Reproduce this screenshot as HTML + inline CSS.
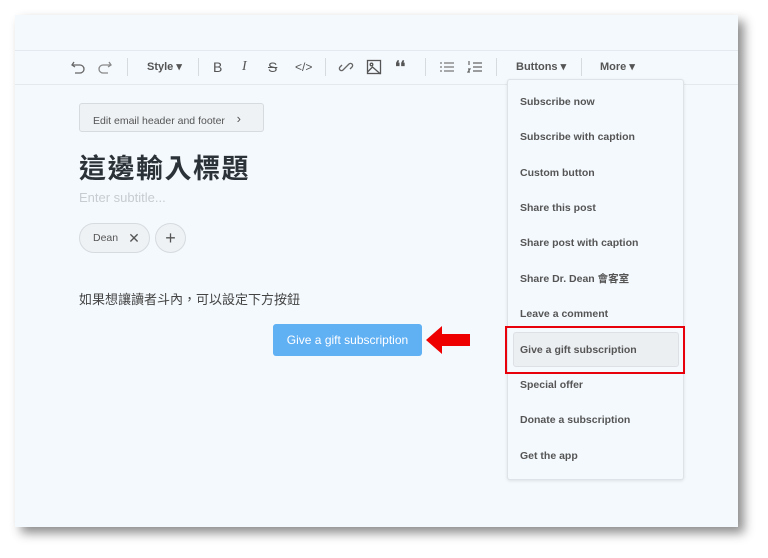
<!DOCTYPE html>
<html><head><meta charset="utf-8"><style>
*{margin:0;padding:0;box-sizing:border-box}
body{width:768px;height:558px;background:#fff;position:relative;overflow:hidden;font-family:"Liberation Sans","Noto Sans CJK TC",sans-serif}
.panel{position:absolute;left:15px;top:15px;width:723px;height:512px;background:#f4f9fd;box-shadow:6px 6px 10px rgba(0,0,0,.45)}
.abs{position:absolute}
.hl{position:absolute;left:15px;width:723px;height:1px;background:#e3e9ee}
.tb{position:absolute;top:60px;font-size:11px;font-weight:bold;color:#555}
.sep{position:absolute;top:58px;width:1px;height:18px;background:#d6dbe0}
.ic{position:absolute;top:59px}
.dd{position:absolute;left:507px;top:79px;width:177px;height:401px;background:#f4f9fd;border:1px solid #dde3e8;border-radius:3px;box-shadow:0 1px 3px rgba(0,0,0,.1)}
.it{position:absolute;left:520px;font-size:10.5px;font-weight:bold;color:#555;line-height:13px;height:13px}
</style></head><body>
<div class="panel"></div>
<div class="hl" style="top:50px"></div>
<div class="hl" style="top:84px"></div>
<svg class="ic" style="left:70px" width="16" height="16" viewBox="0 0 16 16" fill="none" stroke="#666" stroke-width="1.3"><path d="M4 3L2 6l3 2"/><path d="M2.5 6H10a4 4 0 010 8H5"/></svg>
<svg class="ic" style="left:97px" width="16" height="16" viewBox="0 0 16 16" fill="none" stroke="#888" stroke-width="1.3"><path d="M12 3l2 3-3 2"/><path d="M13.5 6H6a4 4 0 000 8h5"/></svg>
<div class="sep" style="left:127px"></div>
<div class="tb" style="left:147px">Style ▾</div>
<div class="sep" style="left:198px"></div>
<div class="tb" style="left:213px;font-size:14px;top:59px;font-weight:normal;color:#555">B</div>
<div class="tb" style="left:242px;font-size:14px;top:59px;font-weight:normal;font-style:italic;font-family:'Liberation Serif',serif;color:#555">I</div>
<div class="tb" style="left:268px;font-size:14px;top:59px;font-weight:normal;text-decoration:line-through;color:#555">S</div>
<div class="tb" style="left:295px;font-size:12px;top:60px;font-weight:normal;color:#555">&lt;/&gt;</div>
<div class="sep" style="left:325px"></div>
<svg class="ic" style="left:338px" width="16" height="16" viewBox="0 0 16 16" fill="none" stroke="#666" stroke-width="1.3"><path d="M7 9l-2 2a2 2 0 01-3-3l2-2M9 7l2-2a2 2 0 013 3l-2 2M6 10l4-4"/></svg>
<svg class="ic" style="left:366px" width="16" height="16" viewBox="0 0 16 16" fill="none" stroke="#555" stroke-width="1.3"><rect x="1.5" y="1.5" width="13" height="13"/><circle cx="5.5" cy="5.5" r="1.3"/><path d="M1.5 13l5-5 8 7"/></svg>
<div class="tb" style="left:395px;font-size:16px;top:57px;color:#555">❛❛</div>
<div class="sep" style="left:425px"></div>
<svg class="ic" style="left:439px" width="16" height="16" viewBox="0 0 16 16" fill="none" stroke="#777" stroke-width="1.2"><path d="M5 4h10M5 8h10M5 12h10M1 4h2M1 8h2M1 12h2"/></svg>
<svg class="ic" style="left:467px" width="16" height="16" viewBox="0 0 16 16" fill="none" stroke="#666" stroke-width="1.2"><path d="M6 4h9M6 8h9M6 12h9M2 2v4M1 10h2l-2 3h2"/></svg>
<div class="sep" style="left:496px"></div>
<div class="tb" style="left:516px">Buttons ▾</div>
<div class="sep" style="left:581px"></div>
<div class="tb" style="left:600px">More ▾</div>

<div class="abs" style="left:79px;top:103px;width:185px;height:29px;background:#eef2f5;border:1px solid #d6dbe0;border-radius:3px;font-size:10.5px;color:#555;padding:8px 0 0 13px">Edit email header and footer&nbsp;&nbsp;&nbsp;&nbsp;<span style="font-size:13px;position:relative;top:-1px">›</span></div>
<div class="abs" style="left:79px;top:147px;font-size:27px;font-weight:bold;color:#2b3238;letter-spacing:1.5px">這邊輸入標題</div>
<div class="abs" style="left:79px;top:190px;font-size:13px;color:#c6ccd1">Enter subtitle...</div>
<div class="abs" style="left:79px;top:223px;width:71px;height:30px;border:1px solid #d6dbe0;border-radius:15px;background:#eef2f5;font-size:10.5px;color:#555;display:flex;align-items:center;padding-left:13px">Dean<span style="font-size:14px;margin-left:10px">✕</span></div>
<div class="abs" style="left:155px;top:223px;width:31px;height:30px;border:1px solid #d6dbe0;border-radius:50%;background:#eef2f5;font-size:18px;color:#555;display:flex;align-items:center;justify-content:center">+</div>
<div class="abs" style="left:79px;top:289px;font-size:13px;color:#444">如果想讓讀者斗內，可以設定下方按鈕</div>
<div class="abs" style="left:273px;top:324px;width:149px;height:32px;background:#60b0f4;border-radius:3px;color:#fff;font-size:12px;text-align:center;line-height:32px">Give a gift subscription</div>
<svg class="abs" style="left:425px;top:324px" width="46" height="32" viewBox="0 0 46 32"><path d="M1 16L17 2v8h28v12H17v8z" fill="#e00"/></svg>

<div class="dd"></div>
<div class="abs" style="left:513px;top:332px;width:166px;height:35px;background:#eceff2;border:1px solid #dde1e5;border-radius:3px"></div>
<div class="abs" style="left:505px;top:326px;width:180px;height:48px;border:2.5px solid #e8000b"></div>
<div class="it" style="top:96px">Subscribe now</div>
<div class="it" style="top:131px">Subscribe with caption</div>
<div class="it" style="top:167px">Custom button</div>
<div class="it" style="top:202px">Share this post</div>
<div class="it" style="top:237px">Share post with caption</div>
<div class="it" style="top:273px">Share Dr. Dean 會客室</div>
<div class="it" style="top:308px">Leave a comment</div>
<div class="it" style="top:344px">Give a gift subscription</div>
<div class="it" style="top:379px">Special offer</div>
<div class="it" style="top:414px">Donate a subscription</div>
<div class="it" style="top:450px">Get the app</div>
</body></html>
